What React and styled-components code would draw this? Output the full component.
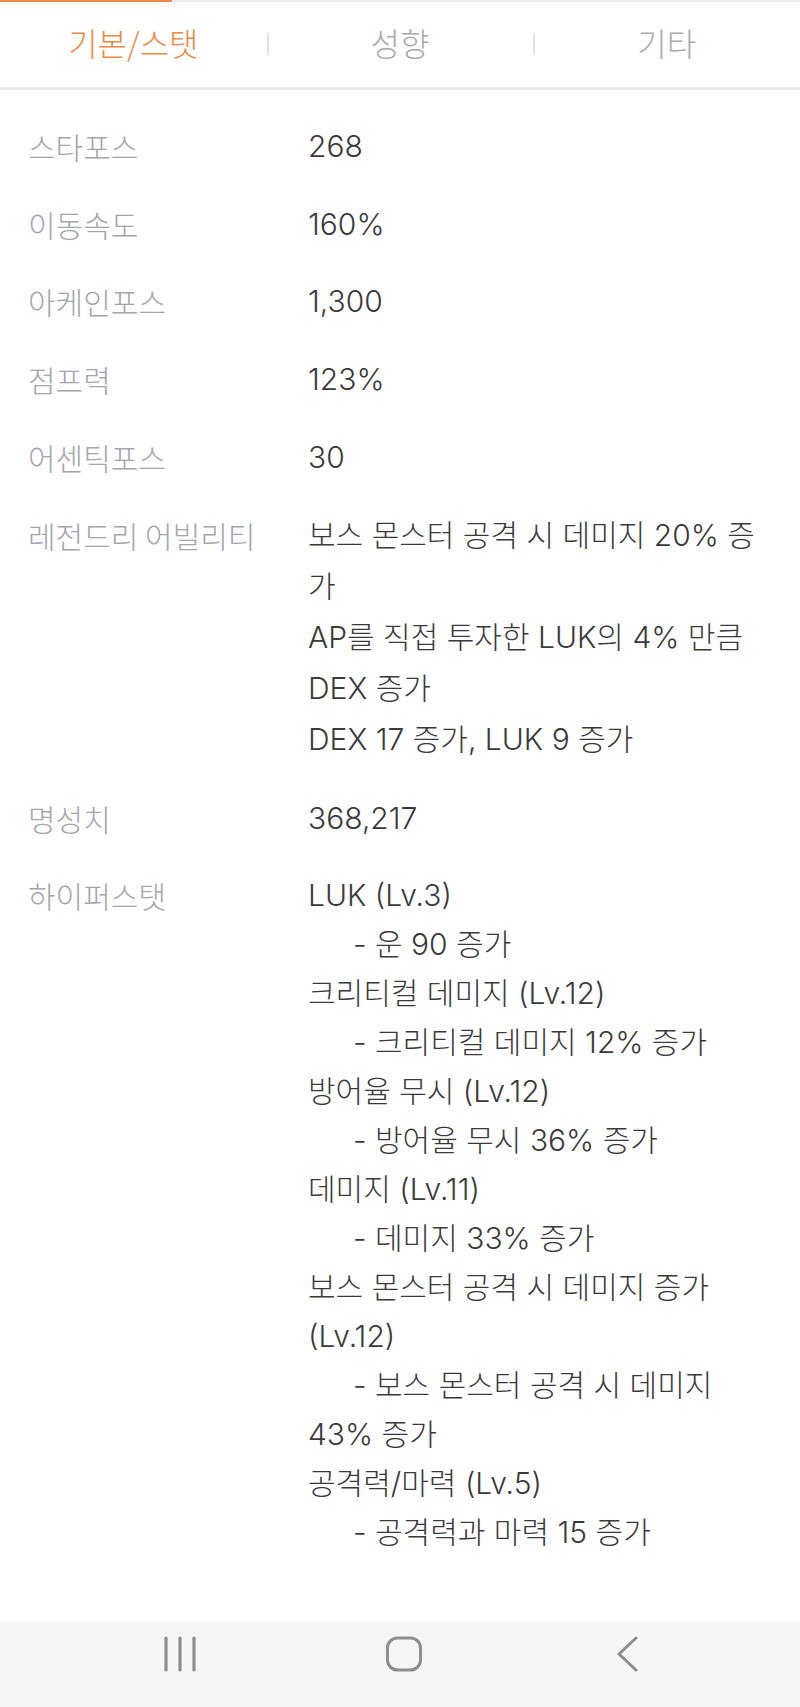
import styled, { createGlobalStyle } from "styled-components";

const GlobalStyle = createGlobalStyle`
  * { box-sizing: border-box; }
  html, body {
    margin: 0;
    padding: 0;
    background: #ffffff;
  }
  body {
    font-family: Inter, "Noto Sans CJK KR", "Noto Sans", sans-serif;
    -webkit-font-smoothing: antialiased;
  }
`;

const tabs = ["기본/스탯", "성향", "기타"];

const rows = [
  { label: "스타포스", lines: [{ text: "268" }] },
  { label: "이동속도", lines: [{ text: "160%" }] },
  { label: "아케인포스", lines: [{ text: "1,300" }] },
  { label: "점프력", lines: [{ text: "123%" }] },
  { label: "어센틱포스", lines: [{ text: "30" }] },
  {
    label: "레전드리 어빌리티",
    lh: 51,
    lines: [
      { text: "보스 몬스터 공격 시 데미지 20% 증" },
      { text: "가" },
      { text: "AP를 직접 투자한 LUK의 4% 만큼" },
      { text: "DEX 증가" },
      { text: "DEX 17 증가, LUK 9 증가" },
    ],
  },
  { label: "명성치", lines: [{ text: "368,217" }] },
  {
    label: "하이퍼스탯",
    lines: [
      { text: "LUK (Lv.3)" },
      { text: "- 운 90 증가", sub: true },
      { text: "크리티컬 데미지 (Lv.12)" },
      { text: "- 크리티컬 데미지 12% 증가", sub: true },
      { text: "방어율 무시 (Lv.12)" },
      { text: "- 방어율 무시 36% 증가", sub: true },
      { text: "데미지 (Lv.11)" },
      { text: "- 데미지 33% 증가", sub: true },
      { text: "보스 몬스터 공격 시 데미지 증가" },
      { text: "(Lv.12)" },
      { text: "- 보스 몬스터 공격 시 데미지", sub: true },
      { text: "43% 증가" },
      { text: "공격력/마력 (Lv.5)" },
      { text: "- 공격력과 마력 15 증가", sub: true },
    ],
  },
];

const RecentsIcon = () => (
  <svg width="40" height="36" viewBox="0 0 40 36" fill="none" stroke="#8d8d8d" strokeWidth="3.2" strokeLinecap="round">
    <line x1="6" y1="2" x2="6" y2="34" />
    <line x1="20" y1="2" x2="20" y2="34" />
    <line x1="34" y1="2" x2="34" y2="34" />
  </svg>
);

const HomeIcon = () => (
  <svg width="38" height="36" viewBox="0 0 38 36" fill="none" stroke="#8d8d8d" strokeWidth="3">
    <rect x="2.5" y="2" width="33" height="32" rx="10" />
  </svg>
);

const BackIcon = () => (
  <svg width="24" height="36" viewBox="0 0 24 36" fill="none" stroke="#8d8d8d" strokeWidth="3" strokeLinecap="round" strokeLinejoin="round">
    <polyline points="20,2 3,18 20,34" />
  </svg>
);

const App = () => {
  return (
    <>
      <GlobalStyle />
      <Page>
        <ScrollHint>
          <span />
        </ScrollHint>
        <TabBar>
          {tabs.map((t, i) => (
            <Tab key={t} $active={i === 0} $first={i === 0}>
              {t}
            </Tab>
          ))}
        </TabBar>
        <List>
          {rows.map((row) => (
            <Row key={row.label} $lh={row.lh}>
              <Label>{row.label}</Label>
              <Value>
                {row.lines.map((line, i) => (
                  <Line key={i} $sub={line.sub}>
                    {line.text}
                  </Line>
                ))}
              </Value>
            </Row>
          ))}
        </List>
        <NavBar>
          <NavButton>
            <RecentsIcon />
          </NavButton>
          <NavButton>
            <HomeIcon />
          </NavButton>
          <NavButton>
            <BackIcon />
          </NavButton>
        </NavBar>
      </Page>
    </>
  );
};

const Page = styled.div`
  height: 1707px;
  width: 100%;
  display: flex;
  flex-direction: column;
  background: #ffffff;
  overflow: hidden;
`;

const ScrollHint = styled.div`
  height: 2px;
  background: #eeeeee;
  span {
    display: block;
    width: 172px;
    height: 100%;
    background: #ec8a47;
  }
`;

const TabBar = styled.div`
  display: grid;
  grid-template-columns: repeat(3, 1fr);
  height: 88px;
  border-bottom: 3px solid #e8e8e8;
  padding-bottom: 6px;
`;

const Tab = styled.div`
  position: relative;
  display: flex;
  align-items: center;
  justify-content: center;
  font-family: "Noto Sans CJK KR", sans-serif;
  font-weight: 300;
  font-size: 32px;
  color: ${(p) => (p.$active ? "#ec8a47" : "#a7aab1")};
  &::before {
    content: "";
    display: ${(p) => (p.$first ? "none" : "block")};
    position: absolute;
    left: 0;
    top: 31px;
    width: 2px;
    height: 22px;
    background: #e4e4e4;
  }
`;

const List = styled.div`
  flex: 1;
  padding: 18px 30px 0 28px;
`;

const Row = styled.div`
  display: grid;
  grid-template-columns: 280px 1fr;
  padding: 14.3px 0;
  font-size: 30px;
  font-weight: 300;
  line-height: ${(p) => p.$lh || 49}px;
`;

const Label = styled.div`
  color: #a3a6ad;
  font-family: "Noto Sans CJK KR", sans-serif;
  white-space: nowrap;
`;

const Value = styled.div`
  color: #3a3a3a;
  display: flex;
  flex-direction: column;
`;

const Line = styled.div`
  white-space: nowrap;
  padding-left: ${(p) => (p.$sub ? "45px" : "0")};
`;

const NavBar = styled.div`
  height: 86px;
  flex-shrink: 0;
  background: #f6f6f6;
  display: flex;
  justify-content: center;
  align-items: flex-start;
  padding: 15px 0 0 8px;
`;

const NavButton = styled.div`
  width: 224px;
  display: flex;
  justify-content: center;
`;

export default App;
